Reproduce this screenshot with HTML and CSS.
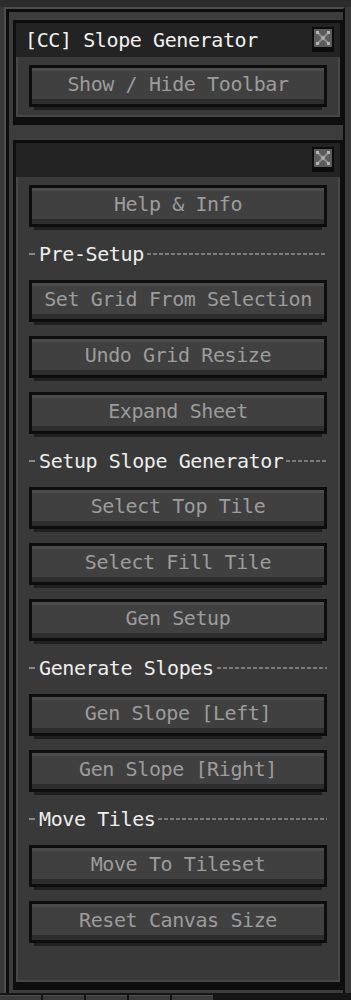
FILE: index.html
```html
<!DOCTYPE html>
<html lang="en">
<head>
    <meta charset="UTF-8">
    <meta name="viewport" content="width=device-width, initial-scale=1.0">
    <title>[CC] Slope Generator</title>
    <link rel="stylesheet" href="styles.css">
</head>
<body>
    <div class="desk">
        <div class="dialog">
            <div class="titlebar">
                <span class="title">[CC] Slope Generator</span>
                <span class="close">
                    <svg width="14" height="14" viewBox="0 0 14 14">
                        <path d="M1.5 1.5L12.5 12.5M12.5 1.5L1.5 12.5" stroke="#8a8a8a" stroke-width="2.2"/>
                        <rect x="0" y="0" width="3" height="3" fill="#b2b2b2"/>
                        <rect x="11" y="0" width="3" height="3" fill="#b2b2b2"/>
                        <rect x="0" y="11" width="3" height="3" fill="#b2b2b2"/>
                        <rect x="11" y="11" width="3" height="3" fill="#b2b2b2"/>
                        <rect x="5.5" y="5.5" width="3" height="3" fill="#b2b2b2"/>
                    </svg>
                </span>
            </div>
            <div class="body">
                <button class="btn">Show / Hide Toolbar</button>
            </div>
        </div>

        <div class="dialog dialog-main">
            <div class="titlebar">
                <span class="title"></span>
                <span class="close">
                    <svg width="14" height="14" viewBox="0 0 14 14">
                        <path d="M1.5 1.5L12.5 12.5M12.5 1.5L1.5 12.5" stroke="#8a8a8a" stroke-width="2.2"/>
                        <rect x="0" y="0" width="3" height="3" fill="#b2b2b2"/>
                        <rect x="11" y="0" width="3" height="3" fill="#b2b2b2"/>
                        <rect x="0" y="11" width="3" height="3" fill="#b2b2b2"/>
                        <rect x="11" y="11" width="3" height="3" fill="#b2b2b2"/>
                        <rect x="5.5" y="5.5" width="3" height="3" fill="#b2b2b2"/>
                    </svg>
                </span>
            </div>
            <div class="body">
                <button class="btn">Help &amp; Info</button>

                <div class="sep"><span class="dash"></span><span class="label">Pre-Setup</span><span class="line"></span></div>
                <button class="btn">Set Grid From Selection</button>
                <button class="btn">Undo Grid Resize</button>
                <button class="btn">Expand Sheet</button>

                <div class="sep"><span class="dash"></span><span class="label">Setup Slope Generator</span><span class="line"></span></div>
                <button class="btn">Select Top Tile</button>
                <button class="btn">Select Fill Tile</button>
                <button class="btn">Gen Setup</button>

                <div class="sep"><span class="dash"></span><span class="label">Generate Slopes</span><span class="line"></span></div>
                <button class="btn">Gen Slope [Left]</button>
                <button class="btn">Gen Slope [Right]</button>

                <div class="sep"><span class="dash"></span><span class="label">Move Tiles</span><span class="line"></span></div>
                <button class="btn">Move To Tileset</button>
                <button class="btn">Reset Canvas Size</button>
            </div>
        </div>
    </div>

    <div class="tabs">
        <span class="tab"></span>
        <span class="tab"></span>
        <span class="tab"></span>
        <span class="tab"></span>
        <span class="tab"></span>
    </div>
</body>
</html>
```

FILE: styles.css
```css
body {
    margin: 0;
    width: 351px;
    height: 1000px;
    overflow: hidden;
    background: linear-gradient(to bottom, #2c2c2c 0, #2c2c2c 7px, #393939 7px);
    font-family: 'DejaVu Sans Mono', 'Liberation Mono', monospace;
    font-size: 20px;
    letter-spacing: -0.4px;
}

.desk {
    margin: 7px 6px 0 4px;
    height: 973px;
    padding: 11px 0 0 7px;
    border-top: 2px solid #4d4d4d;
    border-left: 2px solid #4d4d4d;
    border-right: 2px solid #0d0d0d;
    background: #3c3c3c;
    box-shadow: inset 3px 3px 0 #0d0d0d;
    display: flex;
    flex-direction: column;
    gap: 20px;
}

.dialog {
    width: 330px;
    box-sizing: border-box;
    border: 3px solid #0e0e0e;
    background: #393939;
    box-shadow: 0 5px 0 #0e0e0e;
}

.titlebar {
    height: 34px;
    background: #232323;
    display: flex;
    align-items: center;
    justify-content: space-between;
    padding: 0 6px 0 9px;
}

.title {
    color: #f2f2f2;
}

.close {
    width: 18px;
    height: 18px;
    border: 2px solid #0c0c0c;
    background: #5b5b5b;
    box-shadow: 0 3px 0 #0c0c0c;
    display: flex;
    align-items: center;
    justify-content: center;
    margin-top: -4px;
}

.body {
    display: flex;
    flex-direction: column;
    gap: 14px;
    padding: 8px 13px 10px;
    box-shadow: inset 2px 0 0 #474747, inset -2px 0 0 #474747, inset 0 -2px 0 #474747;
}

.dialog-main .body {
    padding-bottom: 39px;
}

.btn {
    height: 42px;
    width: 100%;
    box-sizing: border-box;
    border: 3px solid #0d0d0d;
    background: #404040;
    color: #9c9c9c;
    font-family: inherit;
    font-size: 20px;
    letter-spacing: -0.4px;
    padding: 0 0 4px;
    box-shadow: inset 0 3px 0 #4b4b4b, inset 0 -5px 0 #2d2d2d, 0 8px 0 -5px #1f1f1f;
    cursor: pointer;
}

.sep {
    height: 25px;
    display: flex;
    align-items: center;
}

.sep .dash {
    width: 6px;
    height: 2px;
    background: #8a8a8a;
    margin-right: 4px;
}

.sep .label {
    color: #eeeeee;
    margin-right: 3px;
}

.sep .line {
    flex: 1;
    height: 2px;
    background: repeating-linear-gradient(to right, #7c7c7c 0, #7c7c7c 4px, transparent 4px, transparent 6px);
}

.tabs {
    height: 8px;
    padding-top: 2px;
    background: #151515;
    display: flex;
    gap: 2px;
}

.tab {
    width: 41px;
    background: #3b3b3b;
    border-top: 1px solid #4e4e4e;
}
```
